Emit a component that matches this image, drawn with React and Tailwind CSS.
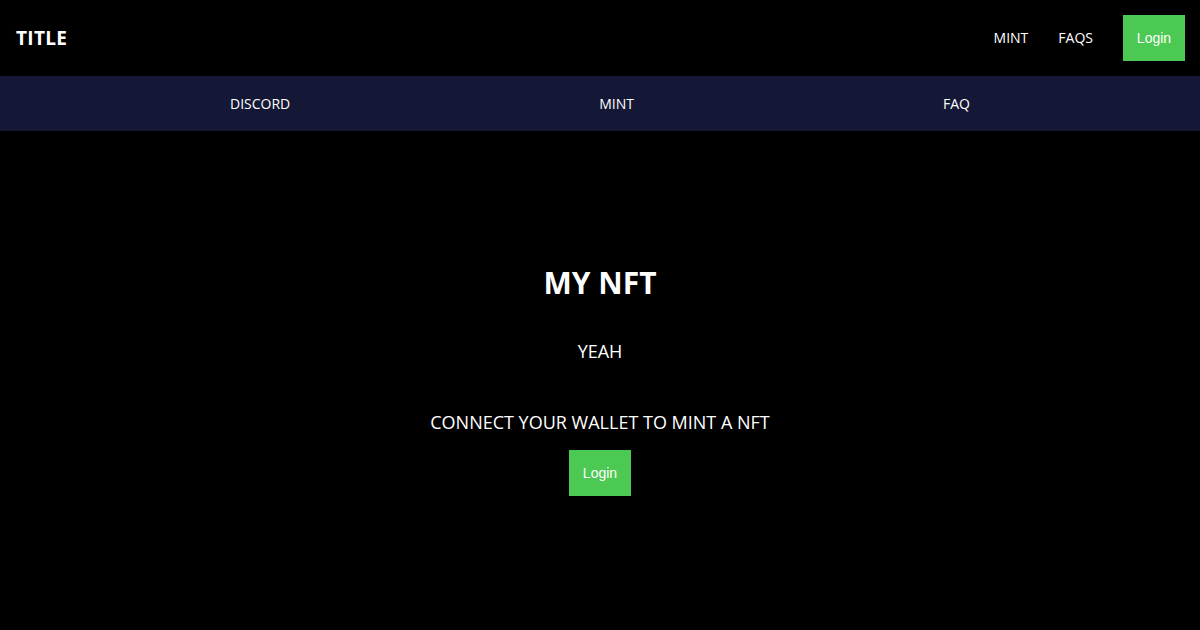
const LoginButton = () => (
	<button className="w-[62px] h-[46px] bg-[#4bc952] text-white text-[14px] font-['Liberation_Sans',Arial,sans-serif]">
		Login
	</button>
);

const App = () => {
	return (
		<div className="min-h-[630px] bg-black text-white font-['Open_Sans',sans-serif]">
			<header className="h-[76px] flex items-center justify-between pl-4 pr-[15px]">
				<h1 className="text-[19px] font-bold tracking-[0.3px]">TITLE</h1>
				<nav className="flex items-center text-[14px]">
					<a className="mr-[30px] -mt-[2px]">MINT</a>
					<a className="mr-[30px] -mt-[2px]">FAQS</a>
					<LoginButton />
				</nav>
			</header>
			<section className="h-[55px] bg-[#141735] flex items-center justify-center gap-[309px] text-[14px]">
				<a>DISCORD</a>
				<a>MINT</a>
				<a>FAQ</a>
			</section>
			<main className="flex flex-col items-center pt-[134px]">
				<h2 className="text-[30px] leading-[36px] font-bold">MY NFT</h2>
				<p className="mt-[38px] text-[18px] leading-[24px]">YEAH</p>
				<p className="mt-[47px] text-[18px] leading-[24px]">CONNECT YOUR WALLET TO MINT A NFT</p>
				<div className="mt-[16px]">
					<LoginButton />
				</div>
			</main>
		</div>
	);
};

export default App;
